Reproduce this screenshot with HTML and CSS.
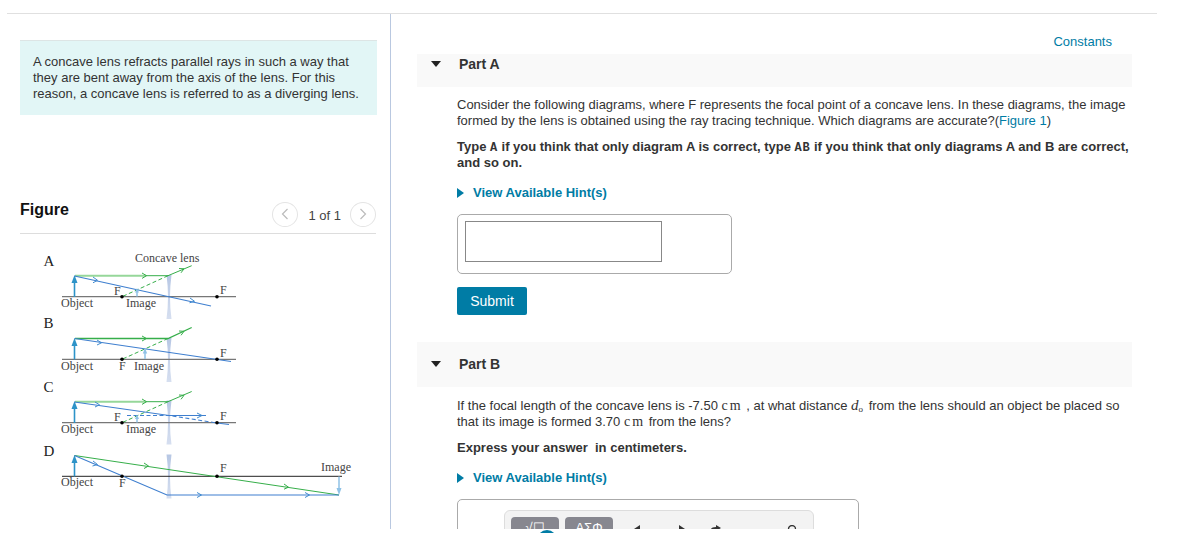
FILE: index.html
```html
<!DOCTYPE html>
<html lang="en">
<head>
  <meta charset="UTF-8">
  <title>Concave lens</title>
  <link rel="stylesheet" href="styles.css">
</head>
<body>
  <div class="page">
    <div class="left">
      <div class="intro">A concave lens refracts parallel rays in such a way that they are bent away from the axis of the lens. For this reason, a concave lens is referred to as a diverging lens.</div>
      <div class="figure-head">
        <h2>Figure</h2>
        <div class="pager">
          <span class="round"><svg width="8" height="12" viewBox="0 0 8 12"><path d="M6.500 1 1.500 6l5 5" fill="none" stroke="#bbb" stroke-width="1.200"/></svg></span>
          <span class="count">1 of 1</span>
          <span class="round"><svg width="8" height="12" viewBox="0 0 8 12"><path d="M1.500 1l5 5-5 5" fill="none" stroke="#bbb" stroke-width="1.200"/></svg></span>
        </div>
      </div>
      <svg class="diagram" width="356" height="280" viewBox="20 240 356 280">
        <defs>
          <linearGradient id="lensFade" x1="0" y1="0" x2="0" y2="1">
            <stop offset="0" stop-color="#b7c7e4"/>
            <stop offset="1" stop-color="#d6dff0"/>
          </linearGradient>
          <path id="lensShape" fill="url(#lensFade)" d="M166.500 0Q169.500 22 166.500 44h5Q168.500 22 171.500 0z"/>
        </defs>

        <!-- A -->
        <text class="letter" x="43.500" y="266">A</text>
        <text class="lbl" x="135" y="262">Concave lens</text>
        <use href="#lensShape" y="275"/>
        <path class="axis gray" d="M62 296.700H236"/>
        <path class="obj" d="M74.500 297V281"/>
        <path class="obj-tip" d="M74.500 275l-3 8h6z"/>
        <path class="green thick" d="M75 275.700H146"/>
        <path class="green" d="M146 275.700H168L191.700 265.700"/>
        <path class="green dash" d="M168 275.700 122 296.700"/>
        <path class="green-head" d="M142 273l4.500 2.700-4.500 2.700M179 268.500l5 .3-3 4"/>
        <path class="blue" d="M74.500 276 211 306"/>
        <path class="blue-head" d="M93 277l4.500 3.300-4.500 2.500M190 298l4.500 3.300-5 1.500"/>
        <path class="img" d="M137 296.500V291"/>
        <path class="img-tip" d="M137 288l-2 4.500h4z"/>
        <circle cx="122" cy="296.700" r="1.800"/><circle cx="217" cy="296.700" r="1.800"/>
        <text class="lbl" x="114" y="295">F</text>
        <text class="lbl" x="220" y="294">F</text>
        <text class="lbl" x="61" y="307">Object</text>
        <text class="lbl" x="126" y="307">Image</text>

        <!-- B -->
        <text class="letter" x="43.500" y="328">B</text>
        <use href="#lensShape" y="338"/>
        <path class="axis gray" d="M62 359.300H236"/>
        <path class="obj" d="M74.500 359.500V344"/>
        <path class="obj-tip" d="M74.500 338l-3 8h6z"/>
        <path class="green strong-line" d="M75 338.500H168L191.700 327.500"/>
        <path class="green dash" d="M168 338.500 122 359.300"/>
        <path class="green-head" d="M142 336l4.500 2.500-4.500 2.500M179 331l5 .3-3 4"/>
        <path class="blue" d="M74.500 338.500 231 361.500"/>
        <path class="blue-head" d="M97 340l4.500 2.800-4.500 2.200"/>
        <path class="img" d="M145 359V352"/>
        <path class="img-tip" d="M145 348l-2.200 5.500h4.400z"/>
        <circle cx="122" cy="359.300" r="1.800"/><circle cx="217" cy="359.300" r="1.800"/>
        <text class="lbl" x="220" y="357">F</text>
        <text class="lbl" x="61" y="370">Object</text>
        <text class="lbl" x="119" y="370">F</text>
        <text class="lbl" x="134" y="370">Image</text>

        <!-- C -->
        <text class="letter" x="43.500" y="392">C</text>
        <use href="#lensShape" y="400.500"/>
        <path class="axis gray" d="M62 422.700H236"/>
        <path class="obj" d="M74.500 423V407"/>
        <path class="obj-tip" d="M74.500 401l-3 8h6z"/>
        <path class="green thick" d="M75 401.700H146"/>
        <path class="green" d="M146 401.700H168L191.700 391.500"/>
        <path class="green dash" d="M168 401.700 122 422.700"/>
        <path class="green-head" d="M142 399l4.500 2.700-4.500 2.700M179 395l5 .3-3 4"/>
        <path class="blue" d="M74.500 402 169 415.500H206"/>
        <path class="blue dash" d="M127 415.500H169L217 423"/>
        <path class="blue" d="M217 423 229 424.500"/>
        <path class="blue-head" d="M95 402l4.500 2.800-4.500 2.200M197 413l5 2.500-5 2.500"/>
        <path class="img" d="M137 422.500V418"/>
        <path class="img-tip" d="M137 414.500l-2 4.500h4z"/>
        <circle cx="122" cy="422.700" r="1.800"/><circle cx="217" cy="422.700" r="1.800"/>
        <text class="lbl" x="114" y="421">F</text>
        <text class="lbl" x="220" y="420">F</text>
        <text class="lbl" x="61" y="433">Object</text>
        <text class="lbl" x="126" y="433">Image</text>

        <!-- D -->
        <text class="letter" x="43.500" y="456">D</text>
        <use href="#lensShape" y="454.500"/>
        <path class="axis" d="M62 476.300H342"/>
        <path class="obj" d="M74.500 476.500V461"/>
        <path class="obj-tip" d="M74.500 455l-3 8h6z"/>
        <path class="green" d="M74.500 455.500 339 495"/>
        <path class="green-head" d="M144 463l4.500 3-4.500 2.500M284 484l4.500 3.200-4.500 2"/>
        <path class="blue" d="M74.500 455.500 167 495H339"/>
        <path class="blue-head" d="M93 461l4.500 3.500-5 1.500M197 492.500l4.500 2.500-4.500 2.500M305 492.500l4.500 2.500-4.500 2.500"/>
        <path class="img" d="M339 476.500V490"/>
        <path class="img-tip" d="M339 495l-2.500-7h5z"/>
        <circle cx="122" cy="476.300" r="1.800"/><circle cx="217" cy="476.300" r="1.800"/>
        <text class="lbl" x="220" y="472">F</text>
        <text class="lbl" x="321" y="471">Image</text>
        <text class="lbl" x="61" y="486">Object</text>
        <text class="lbl" x="119" y="487">F</text>
      </svg>
    </div>

    <div class="right">
      <div class="constants"><a href="#constants">Constants</a></div>

      <div class="part-head part-a"><span class="caret"></span>Part A</div>
      <div class="part-body first">
        <p>Consider the following diagrams, where F represents the focal point of a concave lens. In these diagrams, the image formed by the lens is obtained using the ray tracing technique. Which diagrams are accurate?(<a href="#fig">Figure 1</a>)</p>
        <p class="strong">Type <span class="mono">A</span> if you think that only diagram A is correct, type <span class="mono">AB</span> if you think that only diagrams A and B are correct, and so on.</p>
        <a class="hint" href="#hint"><span class="hint-arrow"></span>View Available Hint(s)</a>
        <div class="answer"><div class="field"></div></div>
        <button class="submit">Submit</button>
      </div>

      <div class="part-head part-b"><span class="caret"></span>Part B</div>
      <div class="part-body second">
        <p>If the focal length of the concave lens is -7.50 <span class="unit">cm</span> , at what distance <i class="var">d<sub>o</sub></i> from the lens should an object be placed so that its image is formed 3.70 <span class="unit">cm</span> from the lens?</p>
        <p class="strong">Express your answer &nbsp;in centimeters.</p>
        <a class="hint" href="#hint"><span class="hint-arrow"></span>View Available Hint(s)</a>
        <div class="answer editor">
          <div class="toolbar">
            <span class="tool-btn">√☐</span>
            <span class="tool-btn">ΑΣΦ</span>
            <svg class="tool-icon undo" width="10" height="10" viewBox="0 0 10 10"><path d="M0 4 6 0v8z"/></svg>
            <svg class="tool-icon redo" width="10" height="10" viewBox="0 0 10 10"><path d="M8 4 2 0v8z"/></svg>
            <svg class="tool-icon reset" width="12" height="10" viewBox="0 0 12 10"><path d="M7 0l5 3-5 3V4Q3 4 2 8 0 2 7 2z"/></svg>
            <svg class="tool-icon help" width="10" height="10" viewBox="0 0 10 10"><path d="M1.500 4a3.500 3.500 0 0 1 7 0" fill="none" stroke="#333" stroke-width="1.300"/></svg>
          </div>
        </div>
      </div>
    </div>
  </div>
  <span class="spinner"></span>
</body>
</html>
```
FILE: styles.css
```css
* {
  box-sizing: border-box;
  margin: 0;
  padding: 0;
}

html, body {
  height: 533px;
  overflow: hidden;
}

body {
  background: white;
  font-family: "Liberation Sans", Arial, sans-serif;
  color: #333;
  position: relative;
  padding: 13px 25px 0 7px;
}

a {
  color: #007ca5;
  text-decoration: none;
}

.page {
  display: flex;
  height: 516px;
  overflow: hidden;
  border-top: 1px solid #e0e0e0;
}

.left {
  width: 384px;
  flex: none;
  border-right: 1px solid #b9c8e0;
  padding: 26px 13px 0;
}

.intro {
  height: 75px;
  background: #e2f6f6;
  border-top: 1px solid #dde5e5;
  padding: 13px 13px 0;
  font-size: 13px;
  line-height: 16px;
}

.figure-head {
  display: flex;
  justify-content: space-between;
  align-items: center;
  height: 119px;
  padding-top: 82px;
  margin-right: 1px;
  border-bottom: 1px solid #ddd;
}

.figure-head h2 {
  font-size: 16px;
  color: #111;
  margin-top: -11px;
}

.pager {
  display: flex;
  align-items: center;
  color: #444;
  font-size: 13px;
  margin-top: -2px;
}

.round {
  width: 26px;
  height: 25px;
  border: 1px solid #e4e4e4;
  border-radius: 50%;
  display: flex;
  align-items: center;
  justify-content: center;
}

.count {
  margin: 2px 9px 0 10px;
}

.diagram {
  display: block;
  margin-top: 6px;
}

.lbl {
  font-family: "Liberation Serif", serif;
  font-size: 12px;
  fill: #444;
}

.letter {
  font-family: "Liberation Serif", serif;
  font-size: 15px;
  fill: #222;
}

.axis, .green, .blue, .green-head, .blue-head, .obj, .img {
  fill: none;
}

.axis {
  stroke: #222;
  stroke-width: 1;
}

.axis.gray {
  stroke: #777;
  stroke-width: 1.200;
}

.green {
  stroke: #36ae4a;
  stroke-width: 1;
}

.green.thick {
  stroke: #96d79a;
  stroke-width: 2;
}

.green.strong-line {
  stroke-width: 1.300;
}

.blue {
  stroke: #3f7fcf;
  stroke-width: 1.100;
}

.dash {
  stroke-dasharray: 4 2.500;
}

.green-head {
  stroke: #36ae4a;
}

.blue-head {
  stroke: #3f8bd0;
}

.obj {
  stroke: #2d93c8;
  stroke-width: 1.600;
}

.obj-tip {
  fill: #2d93c8;
}

.img {
  stroke: #8fc2e6;
  stroke-width: 1.500;
}

.img-tip {
  fill: #8fc2e6;
}

.right {
  flex: 1;
  padding: 0 25px 0 26px;
}

.constants {
  height: 40px;
  padding-top: 20px;
  padding-right: 20px;
  text-align: right;
  font-size: 13px;
  line-height: 15px;
}

.part-head {
  display: flex;
  background: #f9f9f9;
  font-size: 14px;
  font-weight: bold;
  color: #333;
  padding-left: 14px;
  align-items: center;
}

.part-a {
  height: 33px;
  padding-bottom: 13px;
}

.part-b {
  height: 45px;
  margin-top: 27px;
  padding-bottom: 2px;
}

.caret {
  width: 0;
  height: 0;
  border-left: 5.500px solid transparent;
  border-right: 5.500px solid transparent;
  border-top: 6px solid #222;
  margin-right: 18px;
}

.part-body {
  padding-left: 40px;
  font-size: 13px;
  line-height: 16px;
}

.part-body.first {
  padding-top: 10px;
}

.part-body.second {
  padding-top: 11px;
}

.part-body p {
  margin-bottom: 10px;
}

.strong {
  font-weight: bold;
}

.mono {
  font-family: "Liberation Mono", monospace;
  font-size: 12px;
  letter-spacing: .7px;
  line-height: 0;
}

.unit {
  font-family: "Liberation Serif", serif;
  font-size: 14px;
  letter-spacing: 2px;
  line-height: 0;
}

.var {
  font-family: "Liberation Serif", serif;
  font-size: 15px;
  line-height: 0;
}

.var sub {
  font-size: 9px;
  line-height: 0;
  font-style: normal;
  vertical-align: -2px;
  margin-right: 2px;
}

.hint {
  display: flex;
  align-items: center;
  font-weight: bold;
  margin-top: 14px;
}

.hint-arrow {
  width: 0;
  height: 0;
  border-top: 5px solid transparent;
  border-bottom: 5px solid transparent;
  border-left: 7px solid #007ca5;
  margin-right: 9px;
}

.answer {
  width: 275px;
  height: 60px;
  border: 1px solid #aaa;
  border-radius: 5px;
  margin-top: 13px;
  padding: 6px 7px;
}

.field {
  width: 197px;
  height: 41px;
  border: 1px solid #888;
}

.submit {
  display: block;
  width: 70px;
  height: 28px;
  margin-top: 13px;
  background: #007ca5;
  color: white;
  border: none;
  border-radius: 2px;
  font-family: inherit;
  font-size: 14px;
}

.editor {
  width: 402px;
  height: 80px;
  padding: 10px 0 0 46px;
}

.toolbar {
  width: 310px;
  height: 50px;
  background: #f3f3f3;
  border: 1px solid #ddd;
  border-radius: 6px;
  padding: 6px;
  display: flex;
  gap: 6px;
}

.tool-btn {
  width: 48px;
  height: 30px;
  background: #87878f;
  border-radius: 4px;
  color: white;
  text-align: center;
  font-size: 13px;
  line-height: 22px;
}

.tool-icon {
  margin-top: 8px;
  fill: #333;
}

.undo {
  margin-left: 15px;
}

.redo {
  margin-left: 27px;
}

.reset {
  margin-left: 16px;
}

.help {
  margin-left: 60px;
}

.spinner {
  position: absolute;
  left: 537px;
  top: 530px;
  width: 20px;
  height: 20px;
  border-radius: 50%;
  background: #007ca5;
}
```
